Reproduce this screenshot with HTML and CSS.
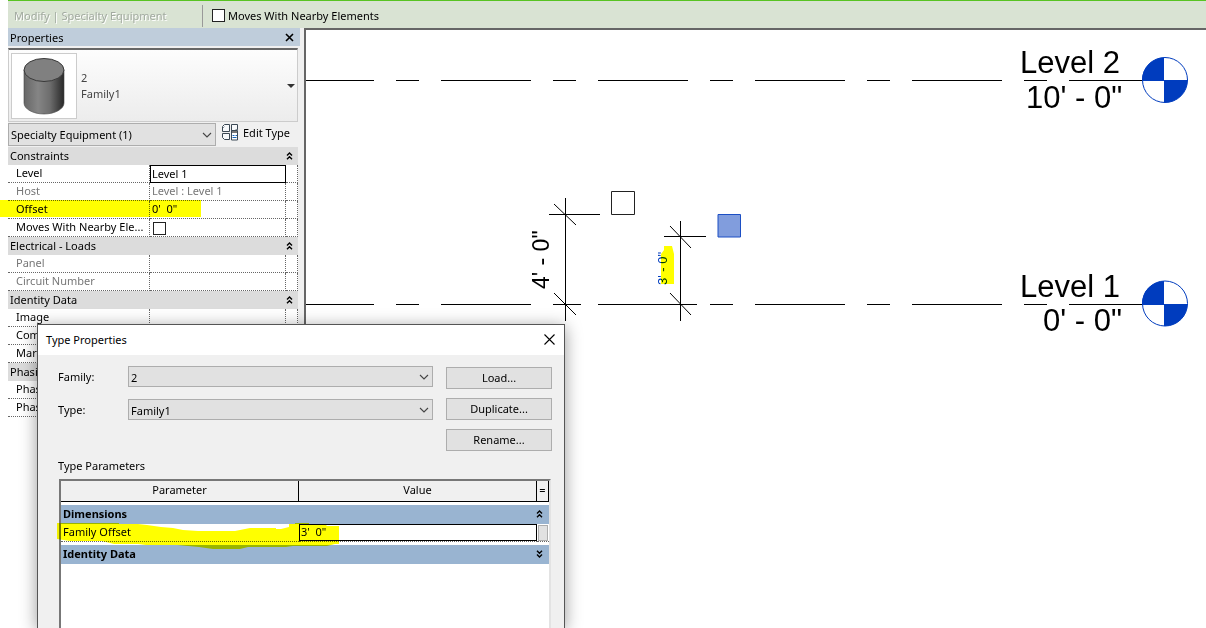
FILE: index.html
```html
<!DOCTYPE html>
<html lang="en">
<head>
<meta charset="utf-8">
<title>Type Properties</title>
<link rel="stylesheet" href="styles.css">
</head>
<body>
<svg class="defs" aria-hidden="true">
  <symbol id="chevron" viewBox="0 0 10 6"><path d="M1 1l4 4 4-4" fill="none" stroke="#444" stroke-width="1.1"/></symbol>
  <symbol id="collapse" viewBox="0 0 7 8"><path d="M1 3.5L3.5 1 6 3.5M1 7.3L3.5 4.8 6 7.3" fill="none" stroke="#000" stroke-width="1.4"/></symbol>
</svg>
<div class="app">
  <header class="options-bar">
    <span class="mode">Modify | Specialty Equipment</span>
    <label class="move-option"><input type="checkbox" class="tick">Moves With Nearby Elements</label>
  </header>
  <div class="workspace">
    <aside class="properties">
      <div class="panel-title"><h2>Properties</h2>
        <button class="icon-button" aria-label="Close properties"><svg width="9" height="9" viewBox="0 0 9 9"><path d="M1 1l7 7M8 1L1 8" stroke="#000" stroke-width="1.6"/></svg></button>
      </div>
      <button class="type-selector">
        <span class="thumb"><svg width="42" height="58" viewBox="0 0 42 58">
          <defs><linearGradient id="side"><stop offset="0" stop-color="#666"/><stop offset=".35" stop-color="#858585"/><stop offset=".65" stop-color="#6d6d6d"/><stop offset="1" stop-color="#282828"/></linearGradient></defs>
          <path d="M1 13v33c0 6 9 11 20 11s20-5 20-11V13z" fill="url(#side)" stroke="#444" stroke-width=".6"/>
          <ellipse cx="21" cy="13" rx="20" ry="11.500" fill="#808080" stroke="#393939"/>
        </svg></span>
        <span class="type-name">2<br>Family1</span>
        <svg class="arrow" width="8" height="4" viewBox="0 0 8 4"><path d="M0 0h8L4 4z" fill="#333"/></svg>
      </button>
      <div class="filter-row">
        <span class="combo filter"><select aria-label="Element filter"><option>Specialty Equipment (1)</option></select><svg width="10" height="6"><use href="#chevron"/></svg></span>
        <button class="edit-type"><svg width="17" height="17" viewBox="0 0 17 17"><g fill="#f7f9fb" stroke="#3b4854"><path d="M2.500.5h5v7h-7v-5zM9.500.5h6v5l-2 2h-4zM.5 9.500h7v6h-5l-2-2z"/><path d="M2.500 2.500l-2 2M15.500 5.500l-2 0" stroke-width=".6"/><path d="M9.500 6.500h6v9.500h-6z" fill="#fff"/></g><path d="M10 7h5v2h-5z" fill="#777"/><path d="M10.500 11.500h2M13.500 11.500h1.500M10.500 13.500h4" stroke="#1565b8"/></svg>Edit Type</button>
      </div>
      <table class="props">
        <colgroup><col class="col-name"><col><col class="col-end"></colgroup>
        <tbody>
        <tr class="group"><th colspan="3"><span>Constraints</span><svg width="7" height="8"><use href="#collapse"/></svg></th></tr>
        <tr><th><label for="level">Level</label></th><td><input id="level" class="active" value="Level 1"></td><td></td></tr>
        <tr class="readonly"><th>Host</th><td>Level : Level 1</td><td></td></tr>
        <tr><th class="marked"><label for="offset">Offset</label></th><td><input id="offset" value="0'&nbsp; 0&quot;"></td><td></td></tr>
        <tr><th><label for="moves">Moves With Nearby Ele...</label></th><td><input type="checkbox" id="moves" class="tick"></td><td></td></tr>
        <tr class="group"><th colspan="3"><span>Electrical - Loads</span><svg width="7" height="8"><use href="#collapse"/></svg></th></tr>
        <tr class="readonly"><th>Panel</th><td></td><td></td></tr>
        <tr class="readonly"><th>Circuit Number</th><td></td><td></td></tr>
        <tr class="group"><th colspan="3"><span>Identity Data</span><svg width="7" height="8"><use href="#collapse"/></svg></th></tr>
        <tr><th>Image</th><td></td><td></td></tr>
        <tr><th>Comments</th><td></td><td></td></tr>
        <tr><th>Mark</th><td></td><td></td></tr>
        <tr class="group"><th colspan="3"><span>Phasing</span><svg width="7" height="8"><use href="#collapse"/></svg></th></tr>
        <tr><th>Phase Created</th><td></td><td></td></tr>
        <tr><th>Phase Demolished</th><td></td><td></td></tr>
        </tbody>
      </table>
    </aside>
    <main class="canvas">
      <svg class="drawing" width="900" height="598" viewBox="306 30 900 598" role="img" aria-label="Elevation view with Level 1 and Level 2">
        <g stroke="#000" fill="none" shape-rendering="crispEdges">
          <path d="M284 80.500H1142M284 304.500H1142" stroke-dasharray="90 22 23 22"/>
          <path d="M565.500 198v123M549 214.500h51M680.500 221v100M664 236.500h42"/>
          <path d="M553 304.500h28M598 304.500h99"/>
        </g>
        <path d="M554 204l22 21M554 293l22 22M670 226l21 22M670 293l21 22" stroke="#000"/>
        <path d="M611.500 191.500h23v23h-23z" fill="#fff" stroke="#222"/>
        <path d="M718 214.500h22.500v22.500H718z" fill="#819ddd" stroke="#1c4fc4"/>
        <g class="level-text">
          <text x="1020" y="73">Level 2</text><text x="1026" y="108">10' - 0"</text>
          <text x="1020" y="297">Level 1</text><text x="1043" y="331">0' - 0"</text>
        </g>
        <g fill="#fff" stroke="#003cbe"><circle cx="1165" cy="80" r="22.500"/><circle cx="1165" cy="303.500" r="22.500"/></g>
        <g fill="#003cbe"><path d="M1164 80.500h-22a22.500 22.500 0 0 1 22-23zM1164 80.500h23.500a22.500 22.500 0 0 1-23.500 22z"/><path d="M1164 304.500h-22a22.500 22.500 0 0 1 22-23.500zM1164 304h23.500a22.500 22.500 0 0 1-23.500 22z"/></g>
        <path d="M1142 80.500h46M1142 304.500h46" stroke="#003cbe" shape-rendering="crispEdges"/>
        <text class="dim" transform="translate(549 289) rotate(-90)">4' - 0"</text>
        <text class="dim small" transform="translate(667 285) rotate(-90)">3' - 0"</text>
        <path class="marker" d="M661 284v-30l3-4v-4h8l2 8v30z"/>
      </svg>
    </main>
  </div>

  <section class="dialog" role="dialog" aria-labelledby="dialog-title">
    <div class="dialog-bar"><h2 id="dialog-title">Type Properties</h2>
      <button class="icon-button" aria-label="Close dialog"><svg width="11" height="11" viewBox="0 0 11 11"><path d="M.5.5l10 10M10.500.5l-10 10" stroke="#000" stroke-width="1.1"/></svg></button>
    </div>
    <div class="dialog-body">
      <div class="selection">
        <div class="fields">
          <label for="family">Family:</label><span class="combo"><select id="family"><option>2</option></select><svg width="10" height="6"><use href="#chevron"/></svg></span>
          <label for="type">Type:</label><span class="combo"><select id="type"><option>Family1</option></select><svg width="10" height="6"><use href="#chevron"/></svg></span>
        </div>
        <div class="actions"><button>Load...</button><button>Duplicate...</button><button>Rename...</button></div>
      </div>
      <h3>Type Parameters</h3>
      <div class="param-box">
        <table class="params">
          <colgroup><col><col><col class="col-lock"></colgroup>
          <thead><tr><th>Parameter</th><th>Value</th><th>=</th></tr></thead>
          <tbody>
          <tr class="gap"><td colspan="3"></td></tr>
          <tr class="section"><th colspan="3"><span>Dimensions</span><svg width="7" height="8"><use href="#collapse"/></svg></th></tr>
          <tr class="param"><th><label for="family-offset">Family Offset</label></th><td><input id="family-offset" value="3'&nbsp; 0&quot;"></td><td><button class="lock" aria-label="Associate parameter"></button></td></tr>
          <tr class="gap"><td colspan="3"></td></tr>
          <tr class="section"><th colspan="3"><span>Identity Data</span><svg class="flip" width="7" height="8"><use href="#collapse"/></svg></th></tr>
          </tbody>
        </table>
        <svg class="highlight" width="284" height="28" viewBox="57 521 284 28" aria-hidden="true"><path class="marker" d="M57 523h62v1h19l9 1 14 2 12 1 10 2 15 1h37l15-3h26v1h5l8-2v-3h6v-1h14v1h16l2 2h12v18h-4l-8 2h-34l-7 1h-38l-8 2h-27l-14-2-22-2h-31l-8-1h-24l-12-3H70l-13-2z"/></svg>
      </div>
    </div>
  </section>
</div>
</body>
</html>
```
FILE: styles.css
```css
* { box-sizing: border-box; }
body { margin: 0; background: #fff; color: #000; font: 11px/18px "Noto Sans", "Open Sans", sans-serif; }
h2, h3 { margin: 0; font-size: inherit; font-weight: 400; }
button, input, select { font: inherit; color: inherit; margin: 0; }
table { width: 100%; border-spacing: 0; table-layout: fixed; }
th, td { padding: 0; font-weight: 400; text-align: left; }
.defs { position: absolute; width: 0; height: 0; }
.app { position: relative; display: flex; flex-direction: column; height: 100vh; padding-left: 8px; overflow: hidden; }

.options-bar { display: flex; align-items: center; flex: none; height: 28px; padding-top: 2px; border-top: 1px solid #58c322; background: #d9e3d3; }
.mode { width: 195px; height: 22px; padding-left: 6px; border-right: 1px solid #999; color: #a2aaa0; text-shadow: 1px 1px #fff; line-height: 22px; white-space: nowrap; }
.move-option { display: flex; align-items: center; gap: 3px; padding-left: 9px; white-space: nowrap; }
.tick { appearance: none; width: 13px; height: 13px; border: 1px solid #222; background: #fff; }

.workspace { display: flex; flex: 1; min-height: 0; }
.properties { flex: none; width: 296px; padding-right: 6px; background: linear-gradient(to right, #fff 290px, #f0f0f0 290px); }
.panel-title { display: flex; align-items: center; justify-content: space-between; height: 20px; margin-right: -2px; padding: 1px 5px 0 2px; background: #bfcddb; border-bottom: 2px solid #f0f0f0; }
.icon-button { display: grid; place-items: center; width: 12px; height: 12px; padding: 0; border: 0; background: none; }
.type-selector { display: flex; align-items: center; gap: 4px; width: 100%; height: 74px; padding: 1px 2px; border: 1px solid #ccc; border-top: 2px solid #666; background: linear-gradient(#fdfdfd, #ececec); text-align: left; }
.thumb { display: grid; place-items: center; width: 66px; height: 66px; border: 1px solid #ccc; background: #fff; }
.type-name { flex: 1; color: #444; line-height: 16px; }
.filter-row { display: flex; height: 25px; padding: 1px 0; background: #f0f0f0; }
.combo { position: relative; display: block; }
.combo select { appearance: none; display: block; width: 100%; height: 100%; padding: 0 2px; border: 1px solid #adadad; border-radius: 0; background: #e1e1e1; }
.combo svg { position: absolute; right: 4px; top: 50%; margin-top: -3px; pointer-events: none; }
.filter { width: 208px; }
.edit-type { display: flex; align-items: center; gap: 4px; padding: 0 0 4px 6px; border: 0; background: none; white-space: nowrap; }

.col-name { width: 142px; }
.col-end { width: 12px; }
.props tr { height: 18px; }
.props th, .props td { height: 18px; padding-bottom: 2px; border: 0 dotted #666; border-width: 0 1px 1px 0; line-height: 15px; white-space: nowrap; overflow: hidden; }
.props th { padding-left: 8px; }
.props td { padding-left: 2px; }
.props .group th { padding: 0 5px 0 2px; border: 0; background: #dcdcdc; line-height: 18px; }
.group span, .section span { float: left; }
.group svg, .section svg { float: right; margin: 5px 0; }
.readonly { color: #777; }
.props input:not(.tick) { display: block; width: 100%; height: 15px; padding: 0; border: 0; background: none; outline: none; }
.props td:has(.active) { padding: 0; border: 0; }
.props input.active { height: 18px; padding: 0 1px 2px; border: 1px solid #000; }
.props td:has(.tick) { padding-bottom: 0; }
.props .tick { display: block; margin: 2px 0 0 1px; }
.props .marked { position: relative; overflow: visible; }
.marked::after { content: ""; position: absolute; left: -8px; top: -1px; width: 201px; height: 17px; background: #ff0; mix-blend-mode: multiply; pointer-events: none; }

.canvas { flex: 1; min-width: 0; border-top: 2px solid #666; border-left: 2px solid #666; overflow: hidden; background: #fff; }
.drawing { display: block; }
.level-text, .dim { font-family: "Liberation Sans", Arial, sans-serif; font-size: 31px; }
.dim { font-size: 23px; }
.dim.small { font-size: 13px; fill: #003cbe; }
.marker { fill: #ff0; mix-blend-mode: multiply; }

.dialog { position: absolute; left: 37px; top: 324px; bottom: 0; display: flex; flex-direction: column; width: 528px; border: 1px solid #555; border-bottom: 0; background: #f0f0f0; box-shadow: 0 3px 16px #0006; }
.dialog-bar { display: flex; align-items: center; justify-content: space-between; height: 30px; padding: 0 9px 1px 8px; background: #fff; }
.dialog-body { display: flex; flex: 1; flex-direction: column; padding: 11px 12px 0 20px; }
.selection { display: flex; gap: 13px; }
.fields { display: grid; flex: 1; grid-template-columns: 70px 1fr; grid-auto-rows: 21px; gap: 12px 0; line-height: 21px; }
.actions { display: grid; grid-auto-rows: 22px; gap: 9px; width: 106px; margin-top: 1px; }
.actions button { padding: 0; border: 1px solid #adadad; background: #e1e1e1; }
.dialog h3 { margin: 6px 0 4px; }
.param-box { position: relative; flex: 1; margin: 0 1px; border: 2px solid #777; border-width: 2px 2px 0; border-right-color: #e3e3e3; background: #fff; }
.col-lock { width: 12px; }
.params thead th { height: 21px; padding-bottom: 2px; border: 1px solid #000; border-width: 0 1px 1px 0; background: #f0f0f0; text-align: center; line-height: 18px; }
.gap td { height: 3px; }
.section th { height: 19px; padding: 0 6px 1px 2px; background: #99b4d1; line-height: 16px; font-weight: 700; }
.section svg { margin: 4px 0; }
.param th, .param td { height: 18px; border-bottom: 1px dotted #666; line-height: 15px; }
.param th { padding: 0 0 2px 2px; }
.section .flip { transform: rotate(180deg); }
.param input { display: block; width: 100%; height: 17px; padding: 0 1px 2px; border: 1px solid #000; background: #fff; }
.lock { display: block; width: 10px; height: 16px; margin-left: 1px; padding: 0; border: 1px solid #adadad; background: #e1e1e1; }
.highlight { position: absolute; left: -4px; top: 40px; mix-blend-mode: multiply; pointer-events: none; }
```
